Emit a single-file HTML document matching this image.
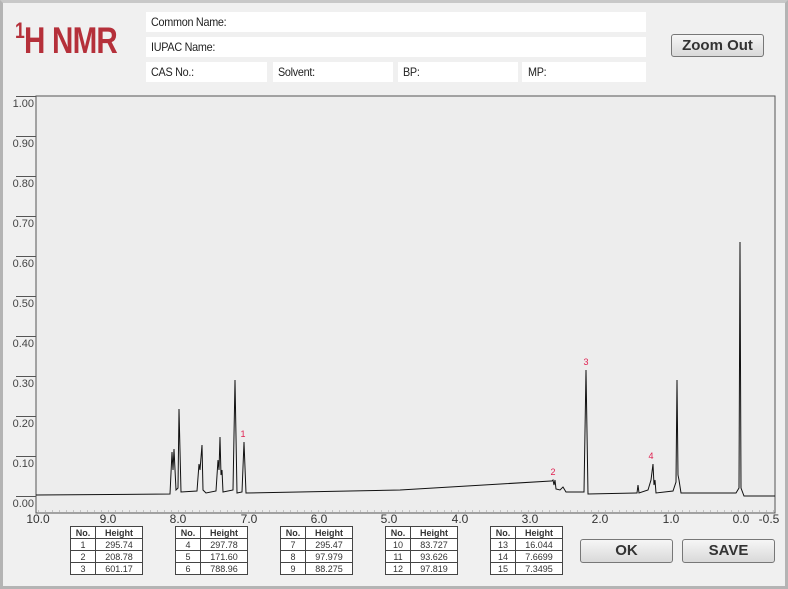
<!DOCTYPE html>
<html><head><meta charset="utf-8"><style>
*{margin:0;padding:0;box-sizing:border-box}
body{width:788px;height:589px;background:#f0f0f0;font-family:"Liberation Sans",sans-serif;position:relative;overflow:hidden}
.frame{position:absolute;left:0;top:0;width:788px;height:589px;border:3px solid #b4b4b4;border-top-color:#c8c8c8}
.fld{position:absolute;background:#fff;height:20px}
.lbl{position:absolute;font-size:12px;color:#222;letter-spacing:-.3px;transform:scaleX(.9);transform-origin:left}
.title{position:absolute;left:15px;top:20px;color:#b5303a;font-weight:bold;font-size:37px;letter-spacing:-1px;transform:scaleX(.8);transform-origin:left}
.title sup{font-size:22px;position:relative;top:-2px;vertical-align:top}
.btn{position:absolute;border:1px solid #777;border-radius:3px;background:linear-gradient(#f6f6f6,#d9d9d9);font-weight:bold;color:#333;text-align:center;font-size:15px}
table{position:absolute;border-collapse:collapse;font-size:9px;background:#fff}
td{border:1px solid #444;height:12px;text-align:center;padding:0;line-height:10px}
td:first-child{width:25px;color:#333}
td:last-child{width:47px;color:#333}
tr:first-child td{font-weight:bold}
</style></head><body>
<div class="frame"></div>
<div class="title"><sup>1</sup>H NMR</div>
<div class="fld" style="left:146px;top:12px;width:500px"></div>
<div class="fld" style="left:146px;top:37px;width:500px"></div>
<div class="fld" style="left:146px;top:62px;width:121px"></div>
<div class="fld" style="left:273px;top:62px;width:120px"></div>
<div class="fld" style="left:398px;top:62px;width:120px"></div>
<div class="fld" style="left:522px;top:62px;width:124px"></div>
<div class="lbl" style="left:151px;top:15px">Common Name:</div>
<div class="lbl" style="left:151px;top:40px">IUPAC Name:</div>
<div class="lbl" style="left:151px;top:65px">CAS No.:</div>
<div class="lbl" style="left:278px;top:65px">Solvent:</div>
<div class="lbl" style="left:403px;top:65px">BP:</div>
<div class="lbl" style="left:528px;top:65px">MP:</div>
<div class="btn" style="left:671px;top:34px;width:93px;height:23px;line-height:21px">Zoom Out</div>
<svg style="position:absolute;left:0;top:0" width="788" height="589">
<rect x="36" y="96" width="739" height="417" fill="#ededed" stroke="#555"/>
<g stroke="#555" stroke-width="1">
<line x1="16" y1="96.5" x2="36" y2="96.5"/><line x1="16" y1="136.5" x2="36" y2="136.5"/><line x1="16" y1="176.5" x2="36" y2="176.5"/><line x1="16" y1="216.5" x2="36" y2="216.5"/><line x1="16" y1="256.5" x2="36" y2="256.5"/><line x1="16" y1="296.5" x2="36" y2="296.5"/><line x1="16" y1="336.5" x2="36" y2="336.5"/><line x1="16" y1="376.5" x2="36" y2="376.5"/><line x1="16" y1="416.5" x2="36" y2="416.5"/><line x1="16" y1="456.5" x2="36" y2="456.5"/><line x1="16" y1="496.5" x2="36" y2="496.5"/>
</g>
<g font-size="11" fill="#444" text-anchor="end">
<text x="34" y="107">1.00</text><text x="34" y="147">0.90</text><text x="34" y="187">0.80</text><text x="34" y="227">0.70</text><text x="34" y="267">0.60</text><text x="34" y="307">0.50</text><text x="34" y="347">0.40</text><text x="34" y="387">0.30</text><text x="34" y="427">0.20</text><text x="34" y="467">0.10</text><text x="34" y="507">0.00</text>
</g>
<g stroke="#999" stroke-dasharray="1 6" stroke-width="1"><line x1="38" y1="511" x2="775" y2="511"/></g>
<g font-size="12" fill="#333" text-anchor="middle">
<text x="38" y="523">10.0</text><text x="108" y="523">9.0</text><text x="178" y="523">8.0</text><text x="249" y="523">7.0</text><text x="319" y="523">6.0</text><text x="389" y="523">5.0</text><text x="460" y="523">4.0</text><text x="530" y="523">3.0</text><text x="600" y="523">2.0</text><text x="671" y="523">1.0</text><text x="741" y="523">0.0</text><text x="769" y="523">-0.5</text>
</g>
<path fill="none" stroke="#111" stroke-width="1" d="M36 495 L170 494 L172 452 L173 470 L174 449 L176 490 L178 488 L179 409 L181 492 L197 491 L199 464 L200 470 L202 445 L203 490 L206 493 L216 491 L218 460 L219 470 L220 437 L221 475 L222 470 L223 492 L233 490 L235 380 L237 493 L242 492 L244 442 L246 493 L400 490 L551 481 L552 481 L553 480 L554 485 L555 480 L556 489 L560 490 L563 487 L566 492 L584 492 L586 370 L588 494 L637 493 L638 485 L639 493 L648 490 L651 480 L653 464 L654 485 L655 480 L656 493 L673 491 L676 482 L677 380 L678 475 L679 480 L681 493 L736 493 L739 488 L740 242 L741 488 L744 496 L775 496"/>
<g font-size="9" fill="#e02050" text-anchor="middle">
<text x="243" y="437">1</text><text x="553" y="475">2</text><text x="586" y="365">3</text><text x="651" y="459">4</text>
</g>
</svg>
<table style="left:70px;top:526px"><tr><td>No.</td><td>Height</td></tr><tr><td>1</td><td>295.74</td></tr><tr><td>2</td><td>208.78</td></tr><tr><td>3</td><td>601.17</td></tr></table>
<table style="left:175px;top:526px"><tr><td>No.</td><td>Height</td></tr><tr><td>4</td><td>297.78</td></tr><tr><td>5</td><td>171.60</td></tr><tr><td>6</td><td>788.96</td></tr></table>
<table style="left:280px;top:526px"><tr><td>No.</td><td>Height</td></tr><tr><td>7</td><td>295.47</td></tr><tr><td>8</td><td>97.979</td></tr><tr><td>9</td><td>88.275</td></tr></table>
<table style="left:385px;top:526px"><tr><td>No.</td><td>Height</td></tr><tr><td>10</td><td>83.727</td></tr><tr><td>11</td><td>93.626</td></tr><tr><td>12</td><td>97.819</td></tr></table>
<table style="left:490px;top:526px"><tr><td>No.</td><td>Height</td></tr><tr><td>13</td><td>16.044</td></tr><tr><td>14</td><td>7.6699</td></tr><tr><td>15</td><td>7.3495</td></tr></table>
<div class="btn" style="left:580px;top:539px;width:93px;height:24px;line-height:22px">OK</div>
<div class="btn" style="left:682px;top:539px;width:93px;height:24px;line-height:22px">SAVE</div>
</body></html>
